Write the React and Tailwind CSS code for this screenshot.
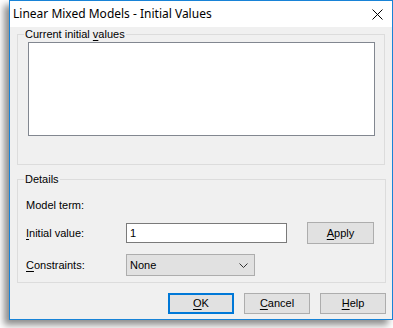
import React from "react";

const ui = { fontFamily: '"Liberation Sans", Arial, sans-serif' };

function Mn({ children }) {
  return <span className="underline underline-offset-2">{children}</span>;
}

function Group({ label, className = "", legendClass = "", children }) {
  return (
    <fieldset className={`border border-[#dcdcdc] mx-[7px] ${className}`}>
      <legend className={`px-[1px] text-[11px] leading-[12px] ${legendClass}`}>{label}</legend>
      {children}
    </fieldset>
  );
}

function Btn({ children, primary = false }) {
  return (
    <button
      className={`h-[21px] w-[66px] bg-[#e1e1e1] text-[11px] text-black ${
        primary ? "border-2 border-[#0078d7]" : "border border-[#adadad]"
      }`}
    >
      {children}
    </button>
  );
}

export default function App() {
  return (
    <div className="w-[393px] h-[328px] bg-white overflow-hidden pl-[9px]" style={ui}>
      <div className="w-[384px] h-[320px] border border-[#1883d7] bg-[#f0f0f0] shadow-[-5px_5px_7px_rgba(0,0,0,0.45)] flex flex-col">
        <div className="h-[26px] bg-white flex items-center justify-between pl-[3px] pr-[9px]">
          <span className="text-[12px] text-black" style={{ fontFamily: '"Noto Sans", sans-serif' }}>
            Linear Mixed Models - Initial Values
          </span>
          <svg width="11" height="11" viewBox="0 0 11 11" className="text-black">
            <path d="M0.5 0.5 L10.5 10.5 M10.5 0.5 L0.5 10.5" stroke="currentColor" strokeWidth="1" />
          </svg>
        </div>

        <Group
          label={<>Current initial <Mn>v</Mn>alues</>}
          legendClass="-ml-[4px]"
          className="mt-[1px] h-[137px] pl-[10px] pr-[9px]"
        >
          <div className="mt-[2px] h-[94px] bg-white border border-[#828790]" />
        </Group>

        <Group label="Details" legendClass="-ml-[2px]" className="mt-[8px] h-[110px] pl-[8px] pr-[11px]">
          <div className="mt-[10px] h-[20px] flex items-center text-[11px]">Model term:</div>
          <div className="mt-[7px] h-[22px] flex items-center text-[11px]">
            <span className="w-[100px]"><Mn>I</Mn>nitial value:</span>
            <div className="h-[20px] w-[161px] bg-white border border-[#7a7a7a] flex items-center pl-[3px]">1</div>
            <button className="ml-[20px] h-[22px] w-[67px] bg-[#e1e1e1] border border-[#adadad] text-[11px]">
              <Mn>A</Mn>pply
            </button>
          </div>
          <div className="mt-[10px] h-[22px] flex items-center text-[11px]">
            <span className="w-[100px]"><Mn>C</Mn>onstraints:</span>
            <div className="h-[22px] w-[129px] bg-[#e1e1e1] border border-[#adadad] flex items-center justify-between pl-[3px] pr-[6px]">
              <span>None</span>
              <svg width="9" height="5" viewBox="0 0 9 5">
                <path d="M0.5 0.5 L4.5 4.5 L8.5 0.5" stroke="#333" fill="none" strokeWidth="1" />
              </svg>
            </div>
          </div>
        </Group>

        <div className="mt-[10px] flex justify-end gap-[10px] pr-[6px]">
          <Btn primary><Mn>O</Mn>K</Btn>
          <Btn><Mn>C</Mn>ancel</Btn>
          <Btn><Mn>H</Mn>elp</Btn>
        </div>
      </div>
    </div>
  );
}
